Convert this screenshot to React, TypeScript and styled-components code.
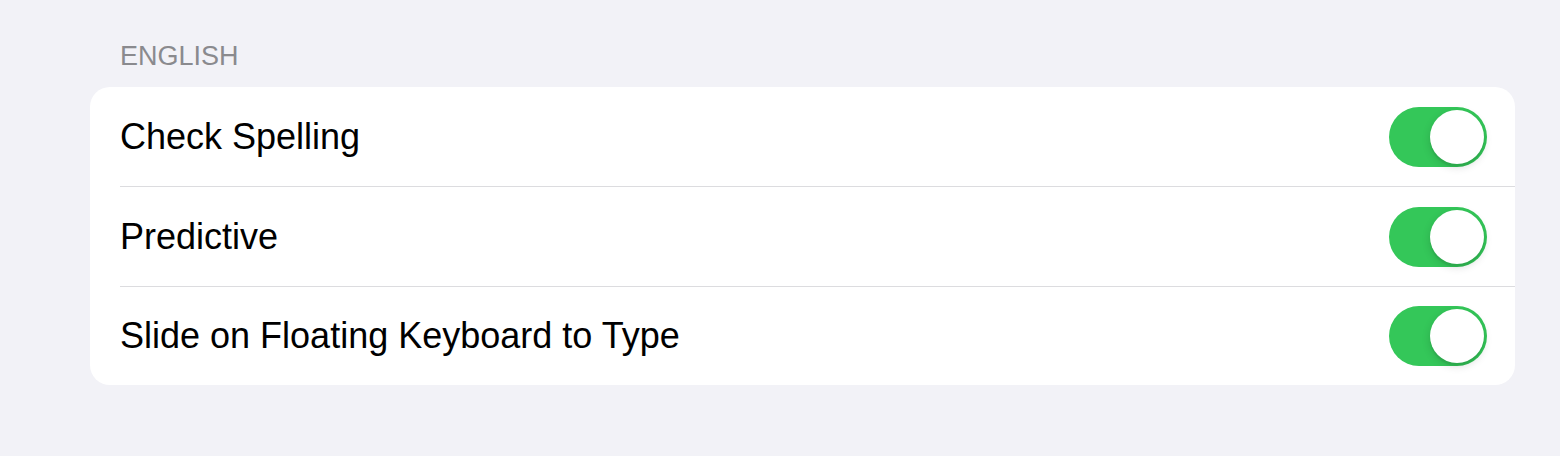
import styled, { createGlobalStyle } from "styled-components";

const GlobalStyle = createGlobalStyle`
    html, body {
        margin: 0;
        padding: 0;
        background: #f2f2f7;
    }

    body {
        font-family: "Liberation Sans", Arial, sans-serif;
        -webkit-font-smoothing: antialiased;
    }
`;

type SettingItem = {
    label: string;
    enabled: boolean;
};

const settings: SettingItem[] = [
    { label: "Check Spelling", enabled: true },
    { label: "Predictive", enabled: true },
    { label: "Slide on Floating Keyboard to Type", enabled: true },
];

const Toggle = ({ on }: { on: boolean }) => (
    <Track $on={on}>
        <Knob $on={on} />
    </Track>
);

const App = () => {
    return (
        <Page>
            <GlobalStyle />
            <SectionHeader>ENGLISH</SectionHeader>
            <Card>
                {settings.map(({ label, enabled }, idx) => (
                    <Row key={label + String(idx)}>
                        <RowInner $last={idx === settings.length - 1}>
                            <Label>{label}</Label>
                            <Toggle on={enabled} />
                        </RowInner>
                    </Row>
                ))}
            </Card>
        </Page>
    );
};

const Page = styled.div`
    display: flex;
    flex-direction: column;

    height: 456px;

    padding: 40px 45px 0 90px;
    box-sizing: border-box;

    background: #f2f2f7;
`;

const SectionHeader = styled.div`
    height: 32px;

    padding-left: 30px;
    margin-bottom: 15px;

    font-size: 27px;
    line-height: 32px;
    color: #8a8a8e;
`;

const Card = styled.div`
    display: flex;
    flex-direction: column;

    background: #ffffff;
    border-radius: 20px;

    overflow: hidden;
`;

const Row = styled.div`
    padding-left: 30px;
`;

const RowInner = styled.div<{ $last: boolean }>`
    display: flex;
    align-items: center;
    justify-content: space-between;

    height: ${({ $last }) => ($last ? "98px" : "99px")};

    padding-right: 28px;

    border-bottom: ${({ $last }) => ($last ? "none" : "1px solid #dcdcdf")};
`;

const Label = styled.span`
    font-size: 36px;
    line-height: 1;
    color: #000000;
`;

const Track = styled.div<{ $on: boolean }>`
    position: relative;
    flex-shrink: 0;

    width: 98px;
    height: 60px;

    border-radius: 30px;
    background: ${({ $on }) => ($on ? "#34c759" : "#e9e9eb")};
`;

const Knob = styled.div<{ $on: boolean }>`
    position: absolute;
    top: 3px;
    left: ${({ $on }) => ($on ? "41px" : "3px")};

    width: 54px;
    height: 54px;

    border-radius: 50%;
    background: #ffffff;
    box-shadow: 0 3px 8px rgba(0, 0, 0, 0.15), 0 3px 1px rgba(0, 0, 0, 0.06);
`;

export default App;
